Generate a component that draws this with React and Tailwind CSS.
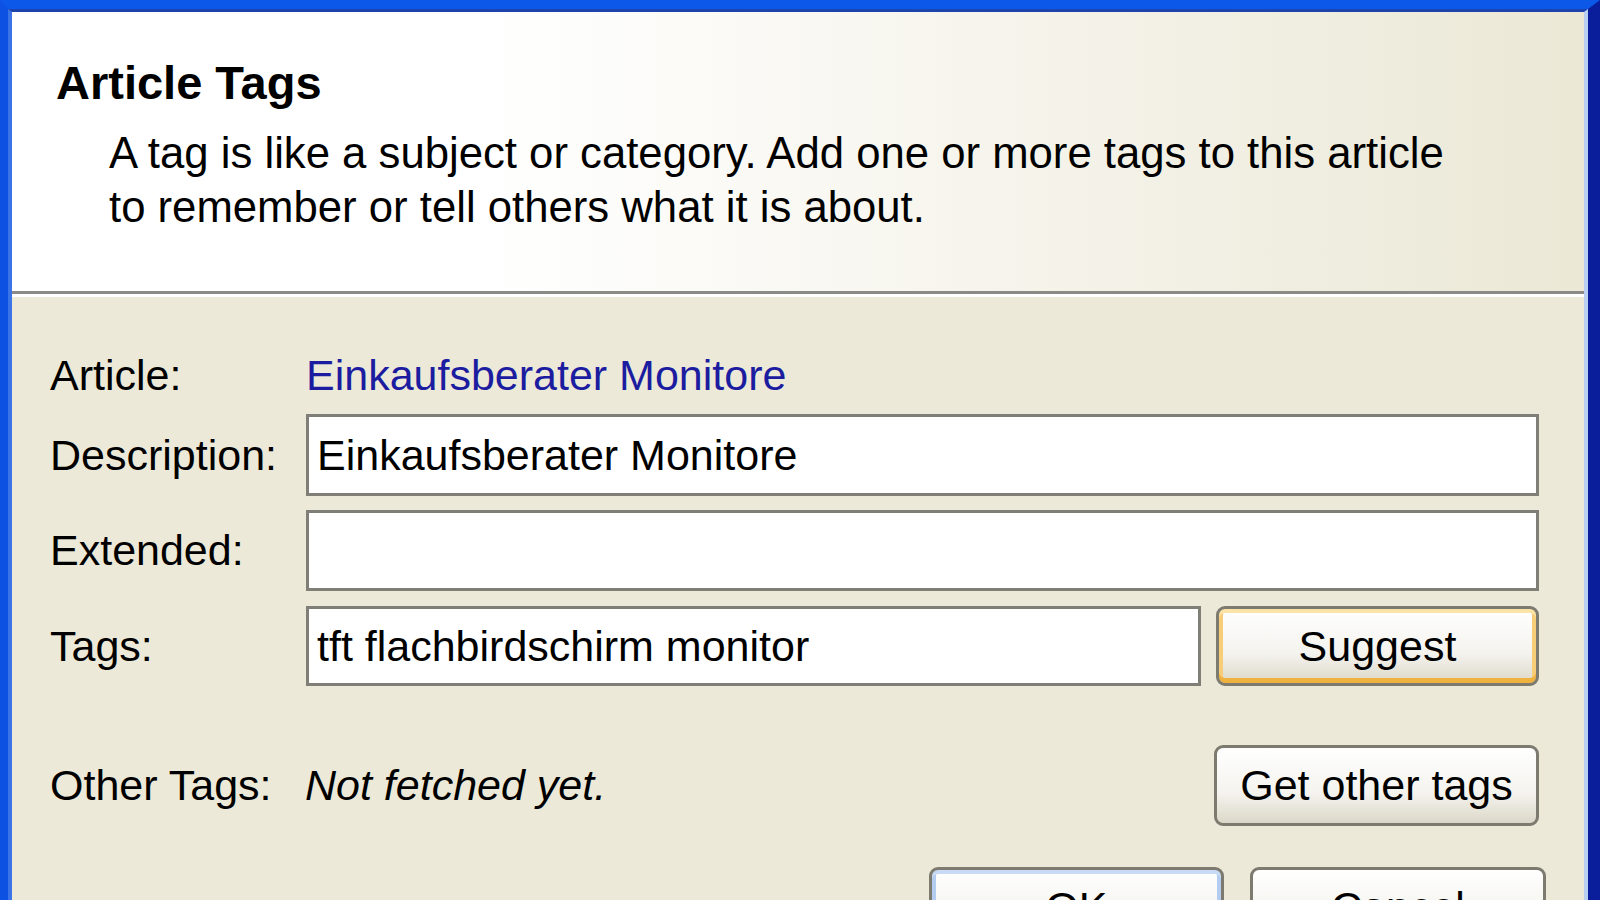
import React from "react";

const font = { fontFamily: '"Liberation Sans", Arial, sans-serif' };

function XpButton({ children, variant = "plain", className = "" }) {
  const ring =
    variant === "default"
      ? "shadow-[inset_0_4px_0_#fce3a8,inset_0_-5px_0_#efb23f,inset_4px_0_0_#f8cd78,inset_-4px_0_0_#f8cd78]"
      : variant === "focus"
      ? "shadow-[inset_0_4px_0_#c9dbf4,inset_0_-4px_0_#9bb6e0,inset_4px_0_0_#b4ccef,inset_-4px_0_0_#b4ccef]"
      : "";
  return (
    <div
      className={`flex shrink-0 items-center justify-center rounded-[9px] border-[3px] border-[#7d7b70] bg-[linear-gradient(to_bottom,#ffffff,#f4f3ee_60%,#dcd8c8)] text-[43px] text-black ${ring} ${className}`}
    >
      {children}
    </div>
  );
}

function TextBox({ value, className = "" }) {
  return (
    <div
      className={`flex items-center border-[3px] border-[#7f7f77] bg-white pl-[8px] text-[43px] text-black ${className}`}
    >
      {value}
    </div>
  );
}

export default function App() {
  return (
    <div
      className="h-[900px] w-[1600px] overflow-hidden border-l-[8px] border-t-[9px] border-r-[12px] border-l-[#0c51e2] border-t-[#0c58e8] border-r-[#0a1e9c]"
      style={font}
    >
      <div className="h-full overflow-hidden border-l-[4px] border-t-[3px] border-r-[4px] border-l-[#3a74e6] border-t-[#1d43ad] border-r-[#b9d0f2]">
        <div className="flex h-full flex-col bg-[#ece9d8]">
          {/* header */}
          <div className="h-[279px] shrink-0 bg-[linear-gradient(to_right,#ffffff_0%,#ffffff_30%,#ebe8d6_100%)] pl-[44px] pt-[48px]">
            <h1 className="text-[47px] font-bold leading-[46px] text-black">
              Article Tags
            </h1>
            <p className="ml-[53px] mt-[20px] text-[43.7px] leading-[54px] text-black">
              A tag is like a subject or category. Add one or more tags to this article
              <br />
              to remember or tell others what it is about.
            </p>
          </div>
          <div className="h-[3px] shrink-0 bg-[#8a8a86]" />
          <div className="h-[3px] shrink-0 bg-white" />

          {/* body */}
          <div className="flex shrink-0 flex-col pl-[38px] pr-[45px] text-[43px] text-black">
            <div className="mt-[48px] flex h-[60px] shrink-0 items-center">
              <span className="w-[256px]">Article:</span>
              <span className="text-[#1c1ca0]">Einkaufsberater Monitore</span>
            </div>

            <div className="mt-[9px] flex h-[82px] shrink-0 items-center">
              <span className="w-[256px] shrink-0">Description:</span>
              <TextBox value="Einkaufsberater Monitore" className="h-full flex-1" />
            </div>

            <div className="mt-[14px] flex h-[81px] shrink-0 items-center">
              <span className="w-[256px] shrink-0">Extended:</span>
              <TextBox value="" className="h-full flex-1" />
            </div>

            <div className="mt-[15px] flex h-[80px] shrink-0 items-center">
              <span className="w-[256px] shrink-0">Tags:</span>
              <TextBox value="tft flachbirdschirm monitor" className="h-full flex-1" />
              <XpButton variant="default" className="ml-[15px] h-full w-[323px]">
                Suggest
              </XpButton>
            </div>

            <div className="mt-[59px] flex h-[81px] shrink-0 items-center">
              <span className="w-[255px] shrink-0">Other Tags:</span>
              <span className="italic">Not fetched yet.</span>
              <XpButton className="ml-auto h-full w-[325px]">Get other tags</XpButton>
            </div>

            <div className="-mr-[7px] mt-[41px] flex h-[81px] shrink-0 justify-end gap-[26px]">
              <XpButton variant="focus" className="h-full w-[295px]">
                OK
              </XpButton>
              <XpButton className="h-full w-[296px]">Cancel</XpButton>
            </div>
          </div>
        </div>
      </div>
    </div>
  );
}
